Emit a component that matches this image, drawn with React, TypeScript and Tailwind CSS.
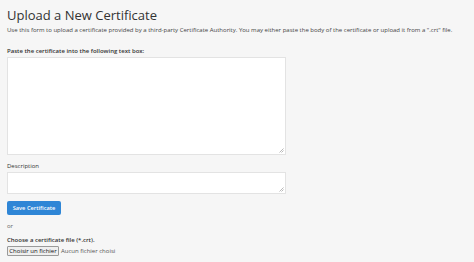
import React from "react";

function Grip() {
  return (
    <svg className="absolute right-[1px] bottom-[1px]" width="5" height="5" viewBox="0 0 5 5">
      <line x1="4.5" y1="0.5" x2="0.5" y2="4.5" stroke="#8a8a8a" strokeWidth="0.6" />
      <line x1="4.5" y1="2.5" x2="2.5" y2="4.5" stroke="#8a8a8a" strokeWidth="0.6" />
    </svg>
  );
}

export default function App() {
  return (
    <div
      className="w-[474px] h-[262px] overflow-hidden bg-[#f6f6f6] text-[#333] pl-[7px] pt-[6px]"
      style={{ fontFamily: '"Open Sans", sans-serif' }}
    >
      <h1 className="text-[13px] leading-[18px] font-normal text-[#333]">Upload a New Certificate</h1>
      <p className="text-[6px] leading-[8px] mt-[2px] text-[#444]">
        Use this form to upload a certificate provided by a third-party Certificate Authority. You may either paste the body of the certificate or upload it from a ".crt" file.
      </p>
      <div className="mt-[13px] text-[6px] leading-[8px] font-semibold text-[#333]">
        Paste the certificate into the following text box:
      </div>
      <div className="relative mt-[2px] w-[279px] h-[98px] bg-white border border-[#e3e3e3]">
        <Grip />
      </div>
      <div className="mt-[7px] text-[6px] leading-[8px] text-[#333]">Description</div>
      <div className="relative mt-[2px] w-[279px] h-[22px] bg-white border border-[#e3e3e3]">
        <Grip />
      </div>
      <div className="mt-[7px] w-[54px] h-[14px] rounded-[2px] bg-[#2f86d6] flex items-center justify-center text-white text-[5.7px] font-semibold">
        Save Certificate
      </div>
      <div className="mt-[7px] text-[6px] leading-[8px] text-[#666]">or</div>
      <div className="mt-[6px] text-[6px] leading-[8px] font-semibold text-[#333]">
        Choose a certificate file (*.crt).
      </div>
      <div className="mt-[2px] flex items-center gap-[2px]">
        <div className="h-[10px] w-[52px] flex items-center justify-center bg-[#efefef] border border-[#9a9a9a] rounded-[1px] text-[6px] text-[#111]">
          Choisir un fichier
        </div>
        <span className="text-[6px] text-[#555]">Aucun fichier choisi</span>
      </div>
    </div>
  );
}
